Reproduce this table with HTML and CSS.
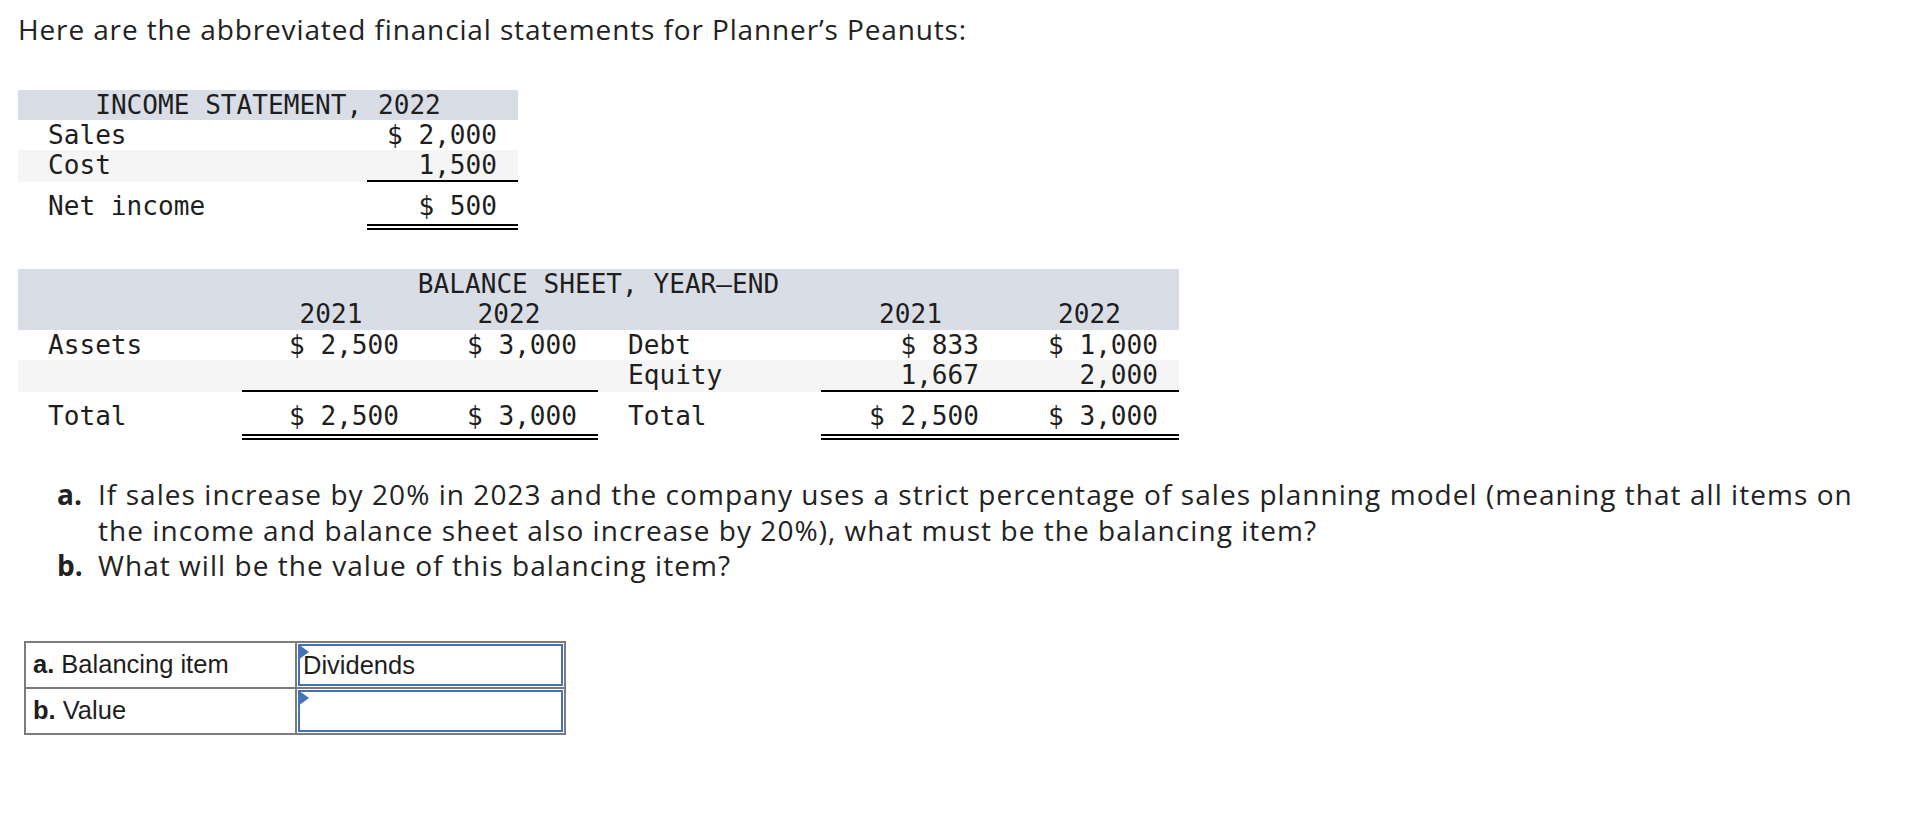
FILE: index.html
```html
<!DOCTYPE html>
<html>
<head>
<meta charset="utf-8">
<title>Planner's Peanuts</title>
<link rel="stylesheet" href="styles.css">
</head>
<body>
<p class="intro">Here are the abbreviated financial statements for Planner’s Peanuts:</p>

<div class="fin income">
  <div class="band title span-all">INCOME STATEMENT, 2022</div>
  <div class="cell lbl r-a">Sales</div>
  <div class="cell num r-a">$ 2,000</div>
  <div class="cell lbl r-b grey">Cost</div>
  <div class="cell num r-b grey under">1,500</div>
  <div class="cell lbl r-t">Net income</div>
  <div class="cell num r-t dbl">$ 500</div>
</div>

<div class="fin balance">
  <div class="band title span-all">BALANCE SHEET, YEAR–END</div>
  <div class="band yr"></div>
  <div class="band yr">2021</div>
  <div class="band yr">2022</div>
  <div class="band yr"></div>
  <div class="band yr">2021</div>
  <div class="band yr">2022</div>

  <div class="cell lbl r-a">Assets</div>
  <div class="cell num r-a">$ 2,500</div>
  <div class="cell num r-a">$ 3,000</div>
  <div class="cell lbl r-a">Debt</div>
  <div class="cell num r-a">$ 833</div>
  <div class="cell num r-a">$ 1,000</div>

  <div class="cell lbl r-b grey"></div>
  <div class="cell num r-b grey under"></div>
  <div class="cell num r-b grey under"></div>
  <div class="cell lbl r-b grey">Equity</div>
  <div class="cell num r-b grey under">1,667</div>
  <div class="cell num r-b grey under">2,000</div>

  <div class="cell lbl r-t">Total</div>
  <div class="cell num r-t dbl">$ 2,500</div>
  <div class="cell num r-t dbl">$ 3,000</div>
  <div class="cell lbl r-t">Total</div>
  <div class="cell num r-t dbl">$ 2,500</div>
  <div class="cell num r-t dbl">$ 3,000</div>
</div>

<ol class="questions">
  <li class="q"><span class="mark">a.</span><span class="qtext">If sales increase by 20% in 2023 and the company uses a strict percentage of sales planning model (meaning that all items on the income and balance sheet also increase by 20%), what must be the balancing item?</span></li>
  <li class="q"><span class="mark">b.</span><span class="qtext">What will be the value of this balancing item?</span></li>
</ol>

<table class="answers">
  <tr>
    <td class="alabel"><b>a.</b> Balancing item</td>
    <td class="ainput"><div class="box"><span class="flag"></span>Dividends</div></td>
  </tr>
  <tr>
    <td class="alabel"><b>b.</b> Value</td>
    <td class="ainput"><div class="box"><span class="flag"></span></div></td>
  </tr>
</table>
</body>
</html>
```
FILE: styles.css
```css
body {
  margin: 0;
  background: #ffffff;
  color: #222222;
}

.intro {
  margin: 0;
  padding: 12px 0 0 18px;
  font-family: "Open Sans", Lato, sans-serif;
  font-size: 28px;
  letter-spacing: 0.87px;
  line-height: 34px;
}

.fin {
  display: grid;
  margin-left: 18px;
  font-family: "DejaVu Sans Mono", "Liberation Mono", monospace;
  font-size: 26.1px;
  color: #1e1e1e;
  white-space: pre;
}

.income {
  margin-top: 44px;
  width: 500px;
  grid-template-columns: 349px 151px;
}

.balance {
  margin-top: 39px;
  width: 1161px;
  grid-template-columns: 224px 178px 178px 223px 179px 179px;
}

.band {
  background: #d9dde6;
  text-align: center;
  line-height: 30px;
}

.span-all {
  grid-column: 1 / -1;
}

.balance .yr {
  line-height: 31px;
}

.cell {
  line-height: 30px;
}

.lbl {
  padding-left: 30px;
}

.num {
  text-align: right;
  padding-right: 21px;
}

.grey {
  background: #f5f5f5;
}

.r-b {
  border-bottom: 2px solid transparent;
}

.under {
  border-bottom: 2px solid #000;
}

.r-t {
  padding-top: 9px;
  padding-bottom: 3px;
  border-bottom: 6px double transparent;
}

.dbl {
  border-bottom: 6px double #000;
}

.questions {
  list-style: none;
  margin: 37px 0 0 0;
  padding: 0 50px 0 57px;
  font-family: "Open Sans", Lato, sans-serif;
  font-size: 28px;
  letter-spacing: 1.05px;
  line-height: 35.5px;
}

.q {
  display: grid;
  grid-template-columns: 41px 1fr;
}

.mark {
  font-weight: 700;
  letter-spacing: 0;
}

.answers {
  margin: 57px 0 0 24px;
  border-collapse: collapse;
  font-family: "Liberation Sans", Arial, sans-serif;
  font-size: 25.5px;
  color: #1e1e1e;
}

.answers td {
  border: 2px solid #7c7c7c;
  height: 42px;
  padding: 0;
}

.alabel {
  width: 262px;
  padding-left: 7px !important;
}

.ainput {
  width: 267px;
}

.box {
  position: relative;
  margin: 1px;
  height: 38px;
  border: 2px solid #4572b6;
  line-height: 38px;
  padding-left: 3px;
}

.flag {
  position: absolute;
  left: -2px;
  top: -2px;
  width: 0;
  height: 0;
  border-top: 8px solid transparent;
  border-bottom: 8px solid transparent;
  border-left: 11px solid #4572b6;
}
```
